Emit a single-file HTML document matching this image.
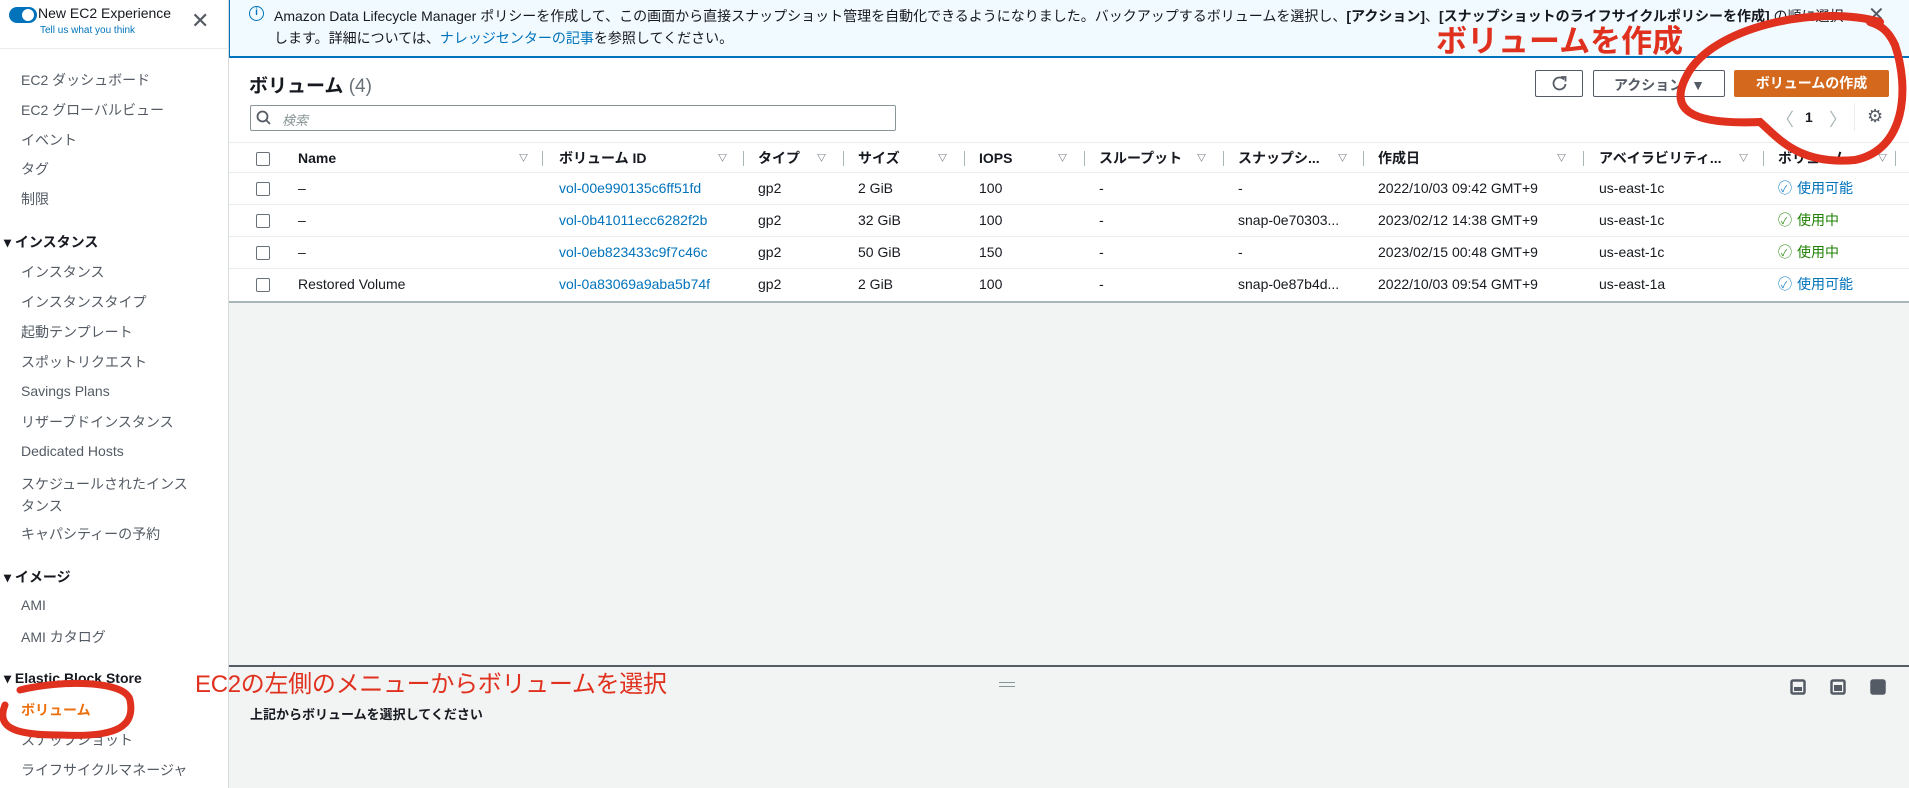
<!DOCTYPE html>
<html><head><meta charset="utf-8"><style>
*{box-sizing:border-box;margin:0;padding:0}
body{width:1909px;height:788px;overflow:hidden;position:relative;background:#f2f3f3;font-family:"Liberation Sans","Noto Sans CJK JP",sans-serif;font-size:14px;color:#16191f}
.a{position:absolute;white-space:nowrap}
#side{position:absolute;left:0;top:0;width:229px;height:788px;background:#fff;border-right:1px solid #d5dbdb}
.si{position:absolute;left:21px;font-size:14px;color:#545b64}
.sh{position:absolute;left:4px;font-size:14px;font-weight:bold;color:#16191f}
#main{position:absolute;left:229px;top:58px;width:1680px;height:245px;background:#fff}
.th{position:absolute;top:144px;height:29px;line-height:29px;font-weight:bold;font-size:14px;color:#16191f}
.dv{position:absolute;top:151px;width:1px;height:15px;background:#aab7b8}
.tr{position:absolute;left:229px;width:1680px;height:32px;border-bottom:1px solid #eaeded;background:#fff}
.c{position:absolute;top:0;line-height:31px;font-size:14px}
.cb{position:absolute;left:27px;top:9px;width:14px;height:14px;border:1.5px solid #687078;border-radius:2px;background:#fff}
.lk{color:#0073bb}
.tri{font-size:9px;color:#545b64;position:absolute;top:0}
</style></head><body>
<div id="side">
 <div class="a" style="left:9px;top:7px;width:28px;height:16px;border-radius:8px;background:#0073bb"></div>
 <div class="a" style="left:22px;top:9px;width:12px;height:12px;border-radius:6px;background:#fff"></div>
 <div class="a" style="left:38px;top:5px;font-size:14px;color:#16191f">New EC2 Experience</div>
 <div class="a" style="left:40px;top:25px;font-size:10px;color:#0073bb">Tell us what you think</div>
 <div class="a" style="left:191px;top:8px;font-size:22px;color:#545b64;font-weight:300">✕</div>
 <div class="a" style="left:0;top:48px;width:229px;height:1px;background:#eaeded"></div>
 <div class="si" style="top:70px">EC2 ダッシュボード</div>
 <div class="si" style="top:100px">EC2 グローバルビュー</div>
 <div class="si" style="top:130px">イベント</div>
 <div class="si" style="top:159px">タグ</div>
 <div class="si" style="top:189px">制限</div>
 <div class="sh" style="top:232px">▾ インスタンス</div>
 <div class="si" style="top:262px">インスタンス</div>
 <div class="si" style="top:292px">インスタンスタイプ</div>
 <div class="si" style="top:322px">起動テンプレート</div>
 <div class="si" style="top:352px">スポットリクエスト</div>
 <div class="si" style="top:383px">Savings Plans</div>
 <div class="si" style="top:412px">リザーブドインスタンス</div>
 <div class="si" style="top:443px">Dedicated Hosts</div>
 <div class="si" style="top:473px;line-height:22px">スケジュールされたインス<br>タンス</div>
 <div class="si" style="top:524px">キャパシティーの予約</div>
 <div class="sh" style="top:567px">▾ イメージ</div>
 <div class="si" style="top:597px">AMI</div>
 <div class="si" style="top:627px">AMI カタログ</div>
 <div class="sh" style="top:670px">▾ Elastic Block Store</div>
 <div class="si" style="top:700px;color:#ec7211;font-weight:bold">ボリューム</div>
 <div class="si" style="top:730px">スナップショット</div>
 <div class="si" style="top:760px">ライフサイクルマネージャ</div>
</div>
<div class="a" style="left:229px;top:0;width:1680px;height:58px;background:#f1faff;border-left:1px solid #0073bb;border-bottom:2px solid #0073bb"></div>
<div class="a" style="left:249px;top:6px;width:15px;height:15px;border:1.5px solid #0073bb;border-radius:50%;color:#0073bb;font-size:10px;font-weight:bold;text-align:center;line-height:12px">i</div>
<div class="a" style="left:274px;top:5px;font-size:14px;line-height:22px">Amazon Data Lifecycle Manager ポリシーを作成して、この画面から直接スナップショット管理を自動化できるようになりました。バックアップするボリュームを選択し、<b>[アクション]</b>、<b>[スナップショットのライフサイクルポリシーを作成]</b> の順に選択<br>します。詳細については、<span class="lk">ナレッジセンターの記事</span>を参照してください。</div>
<div class="a" style="left:1868px;top:2px;font-size:20px;color:#545b64">✕</div>
<div id="main"></div>
<div class="a" style="left:249px;top:71px;font-size:19px;font-weight:bold">ボリューム <span style="font-weight:normal;color:#687078">(4)</span></div>
<div class="a" style="left:250px;top:105px;width:646px;height:26px;border:1px solid #879596;border-radius:2px;background:#fff"></div>
<svg class="a" style="left:256px;top:110px" width="16" height="16"><circle cx="6.5" cy="6.5" r="5" fill="none" stroke="#545b64" stroke-width="1.8"/><path d="M10 10l4 4" stroke="#545b64" stroke-width="1.8"/></svg>
<div class="a" style="left:282px;top:110px;font-size:13px;color:#879596;font-style:italic">検索</div>
<div class="a" style="left:1535px;top:70px;width:48px;height:27px;border:1px solid #545b64;border-radius:2px;background:#fff"></div>
<svg class="a" style="left:1551px;top:75px" width="17" height="17"><path d="M13 4.5A6 6 0 1 0 14.5 9" fill="none" stroke="#545b64" stroke-width="1.8"/><path d="M10 2h4.5v4.5" fill="none" stroke="#545b64" stroke-width="1.8"/></svg>
<div class="a" style="left:1593px;top:70px;width:132px;height:27px;border:1px solid #545b64;border-radius:2px;background:#fff"></div>
<div class="a" style="left:1614px;top:75px;font-weight:bold;color:#545b64">アクション&nbsp;&nbsp;▼</div>
<div class="a" style="left:1734px;top:70px;width:155px;height:27px;border-radius:2px;background:#d4691e;color:#fff;font-weight:bold;text-align:center;line-height:27px;font-size:14px">ボリュームの作成</div>
<div class="a" style="left:1776px;top:106px;font-size:18px;color:#aab7b8">〈</div>
<div class="a" style="left:1805px;top:109px;font-weight:bold">1</div>
<div class="a" style="left:1829px;top:106px;font-size:18px;color:#aab7b8">〉</div>
<div class="a" style="left:1854px;top:103px;width:1px;height:28px;background:#eaeded"></div>
<div class="a" style="left:1867px;top:106px;font-size:18px;color:#545b64">⚙</div>
<div class="a" style="left:229px;top:142px;width:1680px;height:1px;background:#eaeded"></div>
<div class="a" style="left:229px;top:172px;width:1680px;height:1px;background:#eaeded"></div>
<div class="a" style="left:256px;top:152px;width:14px;height:14px;border:1.5px solid #687078;border-radius:2px;background:#fff"></div>
<div class="th" style="left:298px">Name</div><div class="th tri" style="left:519px;top:144px">▽</div><div class="dv" style="left:542px"></div>
<div class="th" style="left:559px">ボリューム ID</div><div class="th tri" style="left:718px;top:144px">▽</div><div class="dv" style="left:743px"></div>
<div class="th" style="left:758px">タイプ</div><div class="th tri" style="left:817px;top:144px">▽</div><div class="dv" style="left:843px"></div>
<div class="th" style="left:858px">サイズ</div><div class="th tri" style="left:938px;top:144px">▽</div><div class="dv" style="left:964px"></div>
<div class="th" style="left:979px">IOPS</div><div class="th tri" style="left:1058px;top:144px">▽</div><div class="dv" style="left:1084px"></div>
<div class="th" style="left:1099px">スループット</div><div class="th tri" style="left:1197px;top:144px">▽</div><div class="dv" style="left:1223px"></div>
<div class="th" style="left:1238px">スナップシ...</div><div class="th tri" style="left:1338px;top:144px">▽</div><div class="dv" style="left:1363px"></div>
<div class="th" style="left:1378px">作成日</div><div class="th tri" style="left:1557px;top:144px">▽</div><div class="dv" style="left:1583px"></div>
<div class="th" style="left:1599px">アベイラビリティ...</div><div class="th tri" style="left:1739px;top:144px">▽</div><div class="dv" style="left:1763px"></div>
<div class="th" style="left:1778px">ボリューム...</div><div class="th tri" style="left:1878px;top:144px">▽</div><div class="dv" style="left:1895px"></div>

<div class="tr" style="top:173px"><div class="cb"></div><div class="c" style="left:69px">–</div><div class="c lk" style="left:330px">vol-00e990135c6ff51fd</div><div class="c" style="left:529px">gp2</div><div class="c" style="left:629px">2 GiB</div><div class="c" style="left:750px">100</div><div class="c" style="left:870px">-</div><div class="c" style="left:1009px">-</div><div class="c" style="left:1149px">2022/10/03 09:42 GMT+9</div><div class="c" style="left:1370px">us-east-1c</div><div class="c" style="left:1549px;color:#0073bb">◯</div><div class="c lk" style="font-size:9px;top:1px;left:1552px">✓</div><div class="c lk" style="left:1568px">使用可能</div></div>
<div class="tr" style="top:205px"><div class="cb"></div><div class="c" style="left:69px">–</div><div class="c lk" style="left:330px">vol-0b41011ecc6282f2b</div><div class="c" style="left:529px">gp2</div><div class="c" style="left:629px">32 GiB</div><div class="c" style="left:750px">100</div><div class="c" style="left:870px">-</div><div class="c" style="left:1009px">snap-0e70303...</div><div class="c" style="left:1149px">2023/02/12 14:38 GMT+9</div><div class="c" style="left:1370px">us-east-1c</div><div class="c" style="left:1549px;color:#1d8102">◯</div><div class="c" style="font-size:9px;top:1px;left:1552px;color:#1d8102">✓</div><div class="c" style="left:1568px;color:#1d8102">使用中</div></div>
<div class="tr" style="top:237px"><div class="cb"></div><div class="c" style="left:69px">–</div><div class="c lk" style="left:330px">vol-0eb823433c9f7c46c</div><div class="c" style="left:529px">gp2</div><div class="c" style="left:629px">50 GiB</div><div class="c" style="left:750px">150</div><div class="c" style="left:870px">-</div><div class="c" style="left:1009px">-</div><div class="c" style="left:1149px">2023/02/15 00:48 GMT+9</div><div class="c" style="left:1370px">us-east-1c</div><div class="c" style="left:1549px;color:#1d8102">◯</div><div class="c" style="font-size:9px;top:1px;left:1552px;color:#1d8102">✓</div><div class="c" style="left:1568px;color:#1d8102">使用中</div></div>
<div class="tr" style="top:269px;border-bottom:2px solid #aab7b8;height:34px"><div class="cb"></div><div class="c" style="left:69px">Restored Volume</div><div class="c lk" style="left:330px">vol-0a83069a9aba5b74f</div><div class="c" style="left:529px">gp2</div><div class="c" style="left:629px">2 GiB</div><div class="c" style="left:750px">100</div><div class="c" style="left:870px">-</div><div class="c" style="left:1009px">snap-0e87b4d...</div><div class="c" style="left:1149px">2022/10/03 09:54 GMT+9</div><div class="c" style="left:1370px">us-east-1a</div><div class="c" style="left:1549px;color:#0073bb">◯</div><div class="c lk" style="font-size:9px;top:1px;left:1552px">✓</div><div class="c lk" style="left:1568px">使用可能</div></div>

<div class="a" style="left:229px;top:665px;width:1680px;height:2px;background:#545b64"></div>
<div class="a" style="left:999px;top:682px;width:16px;height:1px;background:#879596"></div>
<div class="a" style="left:999px;top:686px;width:16px;height:1px;background:#879596"></div>
<div class="a" style="left:250px;top:704px;font-size:13px;font-weight:bold">上記からボリュームを選択してください</div>
<svg class="a" style="left:1790px;top:679px" width="100" height="19">
<rect x="1.5" y="1.5" width="13" height="13" rx="1.5" fill="none" stroke="#545b64" stroke-width="2.5"/><rect x="4" y="8" width="8" height="4" fill="#545b64"/>
<rect x="41.5" y="1.5" width="13" height="13" rx="1.5" fill="none" stroke="#545b64" stroke-width="2.5"/><rect x="44" y="6" width="8" height="6" fill="#545b64"/>
<rect x="81.5" y="1.5" width="13" height="13" rx="1.5" fill="#545b64" stroke="#545b64" stroke-width="2.5"/>
</svg>
<div class="a" style="left:1436px;top:16px;font-size:31px;font-weight:bold;color:#e0301e">ボリュームを作成</div>
<svg class="a" style="left:0;top:0" width="1909" height="788">
<path d="M1880 22 C1820 5,1720 25,1690 70 C1665 110,1690 125,1760 122 C1780 140,1800 165,1855 160 C1905 150,1910 90,1895 45 C1888 30,1880 25,1870 22" fill="none" stroke="#e0301e" stroke-width="8" stroke-linecap="round"/>
<path d="M20 690 C60 680,125 680,130 700 C135 725,120 738,60 735 C20 735,-5 730,5 705" fill="none" stroke="#e0301e" stroke-width="7" stroke-linecap="round"/>
</svg>
<div class="a" style="left:195px;top:664px;font-size:24px;color:#e0301e;letter-spacing:-0.3px">EC2の左側のメニューからボリュームを選択</div>
</body></html>
